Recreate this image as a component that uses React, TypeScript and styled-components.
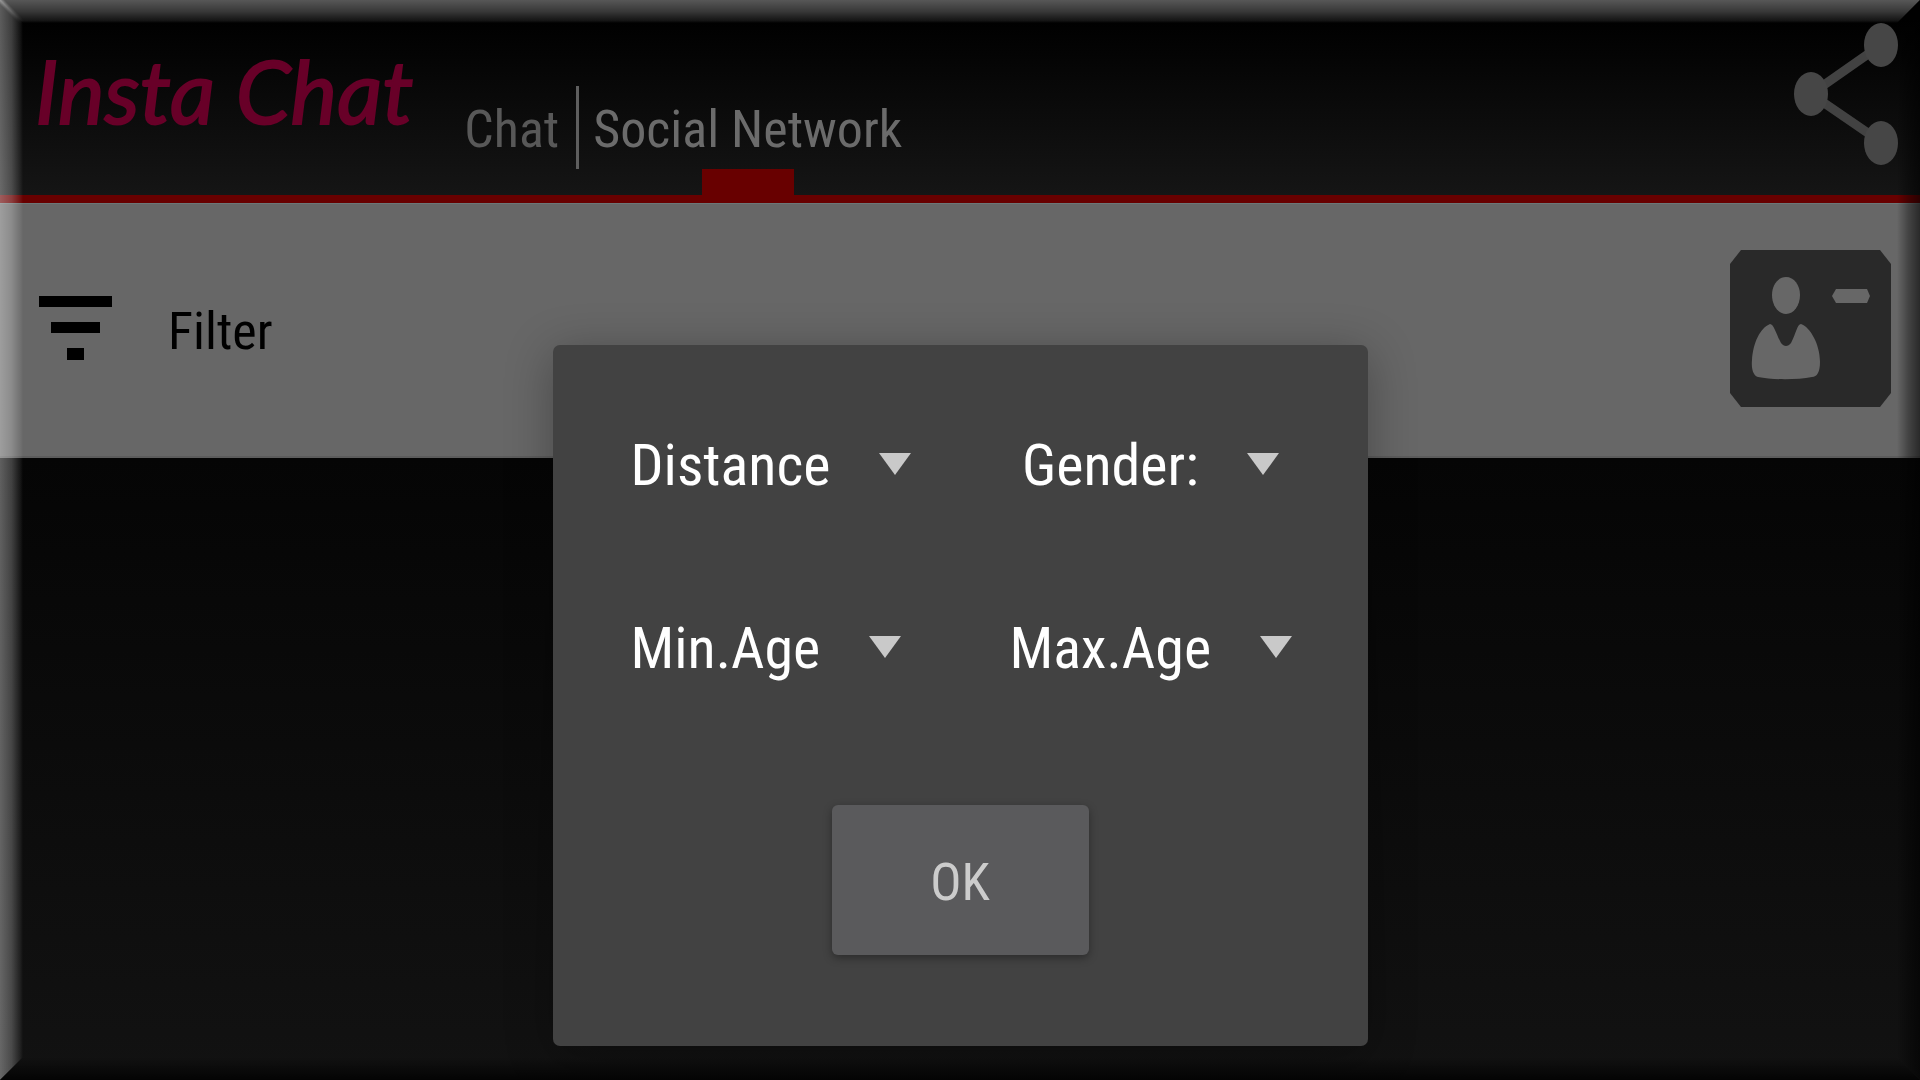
import React, { useId } from "react";
import styled, { createGlobalStyle } from "styled-components";

const GlobalStyle = createGlobalStyle`
  *, *::before, *::after { box-sizing: border-box; }
  body {
    margin: 0;
    background: #050505;
    font-family: "Roboto Condensed", Roboto, "Liberation Sans", sans-serif;
  }
`;

const Screen = styled.div`
  position: relative;
  display: flex;
  flex-direction: column;
  min-height: 100vh;
  overflow: hidden;
`;

const Header = styled.header`
  display: flex;
  align-items: flex-start;
  height: 203px;
  padding: 0 21px 0 35px;
  border-bottom: 8px solid #680000;
  background: linear-gradient(#000 20px, #151515);
`;

const Logo = styled.h1`
  margin: 40px 0 0;
  color: #680028;
  font: italic 400 88px/100px Lato, "Noto Sans", sans-serif;
  -webkit-text-stroke: 2px #680028;
  white-space: nowrap;
`;

const Tabs = styled.nav`
  display: flex;
  margin: 86px auto 0 34px;
`;

const Tab = styled.a<{ $active?: boolean }>`
  position: relative;
  height: 109px;
  padding: 0 17px;
  color: ${(p) => (p.$active ? "#6b6b6b" : "#585858")};
  font-size: 52px;
  line-height: 88px;
  text-decoration: none;
  white-space: nowrap;

  &:not(:first-child)::before {
    content: "";
    position: absolute;
    top: 0;
    left: 0;
    width: 3px;
    height: 83px;
    background: #5e5e5e;
  }

  &::after {
    content: "";
    position: absolute;
    bottom: 0;
    left: 50%;
    width: 92px;
    height: 26px;
    margin-left: -46px;
    background: ${(p) => (p.$active ? "#680000" : "transparent")};
  }
`;

const IconButton = styled.button`
  display: block;
  flex: none;
  padding: 0;
  border: 0;
  background: none;
  color: #464646;

  svg { display: block; }
`;

const ShareButton = styled(IconButton)`
  margin-top: 22px;
`;

const FilterBar = styled.section`
  display: flex;
  align-items: center;
  justify-content: space-between;
  height: 255px;
  padding: 0 29px 4px 39px;
  border-top: 1px solid #6c7778;
  border-bottom: 2px solid #5c5c5c;
  background: #676767;
`;

const FilterButton = styled.button`
  display: flex;
  align-items: center;
  gap: 56px;
  padding: 0;
  border: 0;
  background: none;
  color: #000;
  font: inherit;
  font-size: 52px;
  line-height: 60px;
`;

const FilterText = styled.span`
  padding-top: 8px;
`;

const Results = styled.main`
  flex: 1;
  background: linear-gradient(#050505, #121212);
`;

const Overlay = styled.div`
  position: absolute;
  inset: 0;
  display: flex;
  justify-content: center;
  align-items: flex-start;
  padding-top: 345px;
`;

const Dialog = styled.form`
  display: flex;
  flex-direction: column;
  align-items: center;
  width: 815px;
  max-width: 90%;
  padding: 75px 22px 91px 78px;
  border-radius: 7px;
  background: #424242;
  box-shadow: 0 8px 48px rgba(0, 0, 0, 0.3);
`;

const Fields = styled.div`
  display: grid;
  grid-template-columns: 5fr 6fr;
  align-self: stretch;
  row-gap: 95px;
`;

const Cell = styled.div<{ $centered?: boolean }>`
  display: flex;
  justify-content: ${(p) => (p.$centered ? "center" : "flex-start")};
`;

const Picker = styled.div`
  display: grid;
  align-items: center;

  & > * { grid-area: 1 / 1; }

  svg {
    justify-self: end;
    pointer-events: none;
  }
`;

const Select = styled.select`
  appearance: none;
  height: 88px;
  padding: 2px 80px 0 0;
  border: 0;
  background: transparent;
  color: #fff;
  font: inherit;
  font-size: 58px;
  line-height: 86px;
`;

const OkButton = styled.button`
  width: 257px;
  height: 150px;
  margin: 114px 56px 0 0;
  padding: 4px 0 0;
  border: 0;
  border-radius: 6px;
  background: #5a5a5c;
  box-shadow: 0 3px 8px rgba(0, 0, 0, 0.35);
  color: #ccc;
  font: inherit;
  font-size: 52px;
`;

const Bevel = styled.div<{ $side: "top" | "right" | "bottom" | "left" | "corner" }>`
  position: absolute;
  pointer-events: none;
  ${(p) =>
    ({
      top: `
        inset: 0 0 auto; height: 23px;
        background: linear-gradient(rgba(255,255,255,.34), rgba(255,255,255,.22) 50%, rgba(255,255,255,.08) 90%, rgba(255,255,255,0));
        clip-path: polygon(0 0, 100% 0, calc(100% - 23px) 100%, 23px 100%);`,
      left: `
        inset: 0 auto 0 0; width: 23px;
        background: linear-gradient(90deg, rgba(255,255,255,.36), rgba(255,255,255,.24) 50%, rgba(255,255,255,.06) 90%, rgba(255,255,255,0));
        clip-path: polygon(0 0, 100% 23px, 100% calc(100% - 23px), 0 100%);`,
      right: `
        inset: 0 0 0 auto; width: 23px;
        background: linear-gradient(270deg, rgba(0,0,0,.6), rgba(0,0,0,.35) 50%, rgba(0,0,0,0));
        clip-path: polygon(100% 0, 0 23px, 0 calc(100% - 23px), 100% 100%);`,
      bottom: `
        inset: auto 0 0; height: 23px;
        background: linear-gradient(0deg, rgba(0,0,0,.8), rgba(0,0,0,0));
        clip-path: polygon(0 100%, 23px 0, calc(100% - 23px) 0, 100% 100%);`,
      corner: `
        top: 0; left: 0; width: 23px; height: 23px;
        background: linear-gradient(45deg, rgba(255,255,255,0) 40%, rgba(255,255,255,.4) 50%, rgba(255,255,255,0) 60%);
        mask-image: linear-gradient(135deg, #000, transparent);`,
    })[p.$side]}
`;

const ShareIcon = () => (
  <svg width="105" height="144" viewBox="0 0 105 144" aria-hidden="true">
    <path d="M87 23 17 72l70 48" fill="none" stroke="#424242" strokeWidth="9" />
    <g fill="currentColor">
      <ellipse cx="87" cy="23" rx="17" ry="22" />
      <ellipse cx="17" cy="72" rx="17" ry="22" />
      <ellipse cx="87" cy="121" rx="17" ry="22" />
    </g>
  </svg>
);

const FilterIcon = () => (
  <svg width="73" height="64" viewBox="0 0 73 64" aria-hidden="true">
    <path d="M0 0h73v11H0zM12 26h49v11H12zM28 52h17v12H28z" />
  </svg>
);

const RemoveContactIcon = () => (
  <svg width="161" height="157" viewBox="0 0 161 157" aria-hidden="true">
    <path d="M11 0h139l11 14v129l-11 14H11L0 143V14z" fill="#292929" />
    <g fill="#676767">
      <path d="M56 27c8 0 14 8 14 18s-6 19-14 19-14-9-14-19 6-18 14-18z" />
      <path d="M40 74c4 0 6 10 11 19 3 4 7 4 10 0 5-9 6-19 10-19 9 3 19 20 19 38 0 10-3 15-8 15-15 3-39 3-54 0-4-1-7-7-6-17 1-17 8-32 18-36z" />
      <path d="M106 39h31l3 7-3 7h-31l-4-7z" />
    </g>
  </svg>
);

const Arrow = () => (
  <svg width="32" height="22" viewBox="0 0 32 22" aria-hidden="true">
    <path d="M0 0h32L16 22z" fill="#c9c9c9" />
  </svg>
);

function PickerField({ label, centered }: { label: string; centered?: boolean }) {
  const id = useId();
  return (
    <Cell $centered={centered}>
      <Picker>
        <Select id={id} aria-label={label}>
          <option>{label}</option>
        </Select>
        <Arrow />
      </Picker>
    </Cell>
  );
}

export default function App() {
  return (
    <Screen>
      <GlobalStyle />
      <Header>
        <Logo>Insta Chat</Logo>
        <Tabs>
          <Tab href="#chat">Chat</Tab>
          <Tab href="#social" $active aria-current="page">Social Network</Tab>
        </Tabs>
        <ShareButton type="button" aria-label="Share">
          <ShareIcon />
        </ShareButton>
      </Header>
      <FilterBar>
        <FilterButton type="button">
          <FilterIcon />
          <FilterText>Filter</FilterText>
        </FilterButton>
        <IconButton type="button" aria-label="Remove contact">
          <RemoveContactIcon />
        </IconButton>
      </FilterBar>
      <Results />
      <Overlay>
        <Dialog role="dialog" aria-label="Filter" onSubmit={(e) => e.preventDefault()}>
          <Fields>
            <PickerField label="Distance" />
            <PickerField label="Gender:" centered />
            <PickerField label="Min.Age" />
            <PickerField label="Max.Age" centered />
          </Fields>
          <OkButton type="submit">OK</OkButton>
        </Dialog>
      </Overlay>
      <Bevel $side="top" />
      <Bevel $side="left" />
      <Bevel $side="right" />
      <Bevel $side="bottom" />
      <Bevel $side="corner" />
    </Screen>
  );
}
